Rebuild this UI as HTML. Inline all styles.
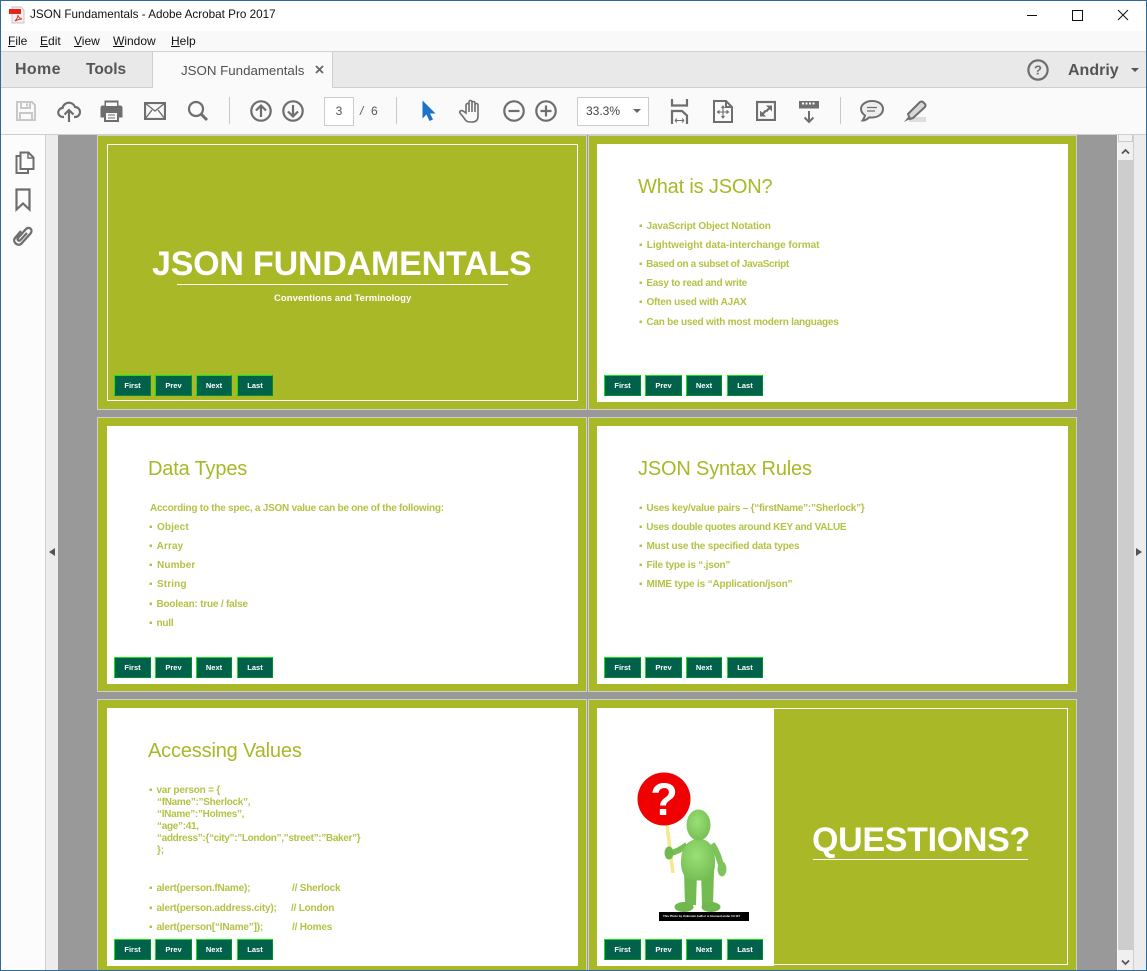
<!DOCTYPE html>
<html><head><meta charset="utf-8"><title>JSON Fundamentals</title>
<style>
html,body{margin:0;padding:0;background:#fff}
#w{position:relative;width:1147px;height:971px;overflow:hidden;background:#fff;font-family:"Liberation Sans",sans-serif}
#w div,#w svg{position:absolute}
.t{white-space:nowrap;line-height:1}
u{text-decoration:underline}
.m{font-size:12px;color:#111;top:35px}
.ic{fill:none;stroke:#6e6e6e;stroke-width:2.2}
.pg{background:#a8b827;box-shadow:0 0 0 1px #cfd0c8 inset}
.in{background:#fff;width:471px;height:258px}
.tt{font-size:20px;color:#a8b827;letter-spacing:-.17px;white-space:nowrap;line-height:1}
.b{font-size:10px;font-weight:bold;color:#a8b827;opacity:.86;white-space:nowrap;line-height:1;letter-spacing:-.2px;margin-top:1px}
.b i{font-style:normal;margin-right:1.5px}
.btn{background:#01614a;height:19px;border:1px solid;border-color:#15e515 #018c30 #018c30 #15e515;color:#fff;font-size:7.5px;font-weight:bold;text-align:center;line-height:19px;box-sizing:content-box}
</style></head><body><div id="w">

<div style="left:0;top:31px;width:1147px;height:20px;background:#f9f9f9"></div>
<div style="left:0;top:51px;width:1147px;height:1px;background:#d2d2d2"></div>
<div style="left:0;top:52px;width:1147px;height:35px;background:#e9e9e9"></div>
<div style="left:0;top:87px;width:1147px;height:1px;background:#cfcfcf"></div>
<div style="left:0;top:88px;width:1147px;height:46px;background:#fafafa"></div>
<div style="left:0;top:134px;width:1147px;height:1px;background:#cfcfcf"></div>

<svg style="left:8px;top:6px" width="18" height="18" viewBox="0 0 18 18"><path d="M4 1h9l3 3v13H4z" fill="#f2efef" stroke="#c9c5c5"/><rect x="1" y="3" width="12" height="5" fill="#e8231b"/><path d="M7 15c2-2 3-4 3-6 0 2 1 3 4 4-3 0-5 1-7 2z" fill="none" stroke="#d8342c"/></svg>
<div class="t" style="left:30px;top:9px;font-size:11.7px;color:#111">JSON Fundamentals - Adobe Acrobat Pro 2017</div>
<div style="left:1027px;top:15px;width:10px;height:1px;background:#111"></div>
<div style="left:1072px;top:10px;width:9px;height:9px;border:1px solid #111"></div>
<svg style="left:1117px;top:9px" width="12" height="12" viewBox="0 0 12 12"><path d="M1 1l10 10M11 1L1 11" stroke="#111" fill="none"/></svg>

<div class="t m" style="left:8px"><u>F</u>ile</div>
<div class="t m" style="left:40px"><u>E</u>dit</div>
<div class="t m" style="left:74px"><u>V</u>iew</div>
<div class="t m" style="left:113px"><u>W</u>indow</div>
<div class="t m" style="left:171px"><u>H</u>elp</div>

<div class="t" style="left:15px;top:62px;font-size:16px;letter-spacing:.35px;font-weight:bold;color:#555">Home</div>
<div class="t" style="left:86px;top:62px;font-size:15.5px;font-weight:bold;color:#555">Tools</div>
<div style="left:152px;top:52px;width:179px;height:36px;background:#fafafa;border-left:1px solid #cfcfcf;border-right:1px solid #cfcfcf"></div>
<div class="t" style="left:181px;top:64px;font-size:13.3px;color:#505050">JSON Fundamentals</div>
<svg style="left:315px;top:65px" width="9" height="9" viewBox="0 0 9 9"><path d="M1 1l7 7M8 1L1 8" stroke="#666" stroke-width="1.8"/></svg>
<svg style="left:1026px;top:58px" width="24" height="24" viewBox="0 0 24 24"><circle cx="12" cy="12" r="9.6" class="ic"/><text x="12" y="16.5" text-anchor="middle" font-size="13" font-weight="bold" fill="#6e6e6e" font-family="Liberation Sans">?</text></svg>
<div class="t" style="left:1068px;top:63px;font-size:16px;font-weight:bold;color:#555">Andriy</div>
<div style="left:1131px;top:68px;width:0;height:0;border:4px solid transparent;border-top:4px solid #555;border-bottom:0"></div>

<!-- toolbar icons -->
<svg style="left:15px;top:100px" width="22" height="22" viewBox="0 0 22 22"><path d="M2 2h15l3 3v15H2z M6 2v6h9V2 M12 3.5v3 M5 20v-7h12v7" fill="none" stroke="#c8c8c8" stroke-width="2"/></svg>
<svg style="left:57px;top:99px" width="24" height="24" viewBox="0 0 24 24"><path d="M7 18H6a4.5 4.5 0 0 1-.5-9A6.5 6.5 0 0 1 18 8a5 5 0 0 1 0 10h-1" class="ic"/><path d="M12 23V11M7.5 15.5L12 11l4.5 4.5" class="ic"/></svg>
<svg style="left:100px;top:100px" width="23" height="22" viewBox="0 0 23 22"><path d="M5 6V1h13v5M5 17H1V8q0-2 2-2h17q2 0 2 2v9h-4" fill="#6e6e6e" stroke="#6e6e6e"/><rect x="6" y="2.5" width="11" height="3.5" fill="#fafafa"/><rect x="5" y="12" width="13" height="9" fill="#fafafa" stroke="#6e6e6e" stroke-width="2"/><path d="M8 15h7M8 18h7" stroke="#6e6e6e"/></svg>
<svg style="left:144px;top:102px" width="22" height="18" viewBox="0 0 22 18"><rect x="1" y="1" width="20" height="16" class="ic"/><path d="M1 1l10 8 10-8M1 17l7-9M21 17l-7-9" fill="none" stroke="#6e6e6e" stroke-width="1.4"/></svg>
<svg style="left:187px;top:100px" width="22" height="22" viewBox="0 0 22 22"><circle cx="9" cy="9" r="7" class="ic"/><path d="M14 14l6 6" stroke="#6e6e6e" stroke-width="3"/></svg>
<div style="left:229px;top:97px;width:1px;height:27px;background:#c8c8c8"></div>
<svg style="left:250px;top:100px" width="22" height="22" viewBox="0 0 22 22"><circle cx="11" cy="11" r="9.7" class="ic"/><path d="M11 17V5.5M6 10.5l5-5 5 5" class="ic"/></svg>
<svg style="left:282px;top:100px" width="22" height="22" viewBox="0 0 22 22"><circle cx="11" cy="11" r="9.7" class="ic"/><path d="M11 5v11.5M6 11.5l5 5 5-5" class="ic"/></svg>
<div class="t" style="left:324px;top:97px;width:28px;height:27px;border:1px solid #ccc;background:#fff;font-size:12px;text-align:center;line-height:27px;color:#555">3</div>
<div class="t" style="left:360px;top:105px;font-size:12px;color:#555;font-style:italic">/</div>
<div class="t" style="left:371px;top:105px;font-size:12px;color:#556">6</div>
<div style="left:396px;top:97px;width:1px;height:27px;background:#c8c8c8"></div>

<svg style="left:421px;top:100px" width="16" height="22" viewBox="0 0 16 22"><path d="M1.5 0.5v18l4-4 3 6.500 3.500-1.500-3-6h5.500z" fill="#1a73c9"/></svg>
<svg style="left:459px;top:99px" width="24" height="25" viewBox="0 0 24 25"><path d="M7 14V6a1.4 1.4 0 0 1 3 0V3a1.4 1.4 0 0 1 3 0v1a1.4 1.4 0 0 1 3 0v2a1.4 1.4 0 0 1 3 0v11c0 4-2 6-6 6h-2c-3 0-4-1-6-4l-4-5c-1-2 1-3 3-2zM10 5v8M13 4v9M16 5v8" fill="none" stroke="#6e6e6e" stroke-width="1.6"/></svg>
<svg style="left:503px;top:100px" width="22" height="22" viewBox="0 0 22 22"><circle cx="11" cy="11" r="9.7" class="ic"/><path d="M5.5 11h11" class="ic"/></svg>
<svg style="left:535px;top:100px" width="22" height="22" viewBox="0 0 22 22"><circle cx="11" cy="11" r="9.7" class="ic"/><path d="M5.5 11h11M11 5.5v11" class="ic"/></svg>
<div style="left:577px;top:97px;width:70px;height:27px;border:1px solid #ccc;background:#fff"></div>
<div class="t" style="left:586px;top:105px;font-size:12px;color:#444">33.3%</div>
<div style="left:633px;top:109px;width:0;height:0;border:4px solid transparent;border-top:4px solid #666;border-bottom:0"></div>
<svg style="left:670px;top:99px" width="20" height="26" viewBox="0 0 20 26"><path d="M2 0v6.500h15V0M2 25V12h10l5 4.500V25" fill="none" stroke="#6e6e6e" stroke-width="2.200"/><path d="M5 21.500h9M5 21.500l2-2M5 21.500l2 2M14 21.500l-2-2M14 21.500l-2 2" stroke="#6e6e6e" fill="none"/></svg>
<svg style="left:713px;top:100px" width="20" height="23" viewBox="0 0 20 23"><path d="M1 1h12l6 6v15H1zM13 1v6h6" fill="none" stroke="#6e6e6e" stroke-width="2"/><path d="M10 6v12M4.500 12h11M8.500 8l1.500-2 1.500 2M8.500 16l1.500 2 1.500-2M6.500 10.500l-2 1.500 2 1.500M13.500 10.500l2 1.500-2 1.500" stroke="#6e6e6e" fill="none" stroke-width="1.1"/></svg>
<svg style="left:756px;top:100px" width="20" height="21" viewBox="0 0 20 21"><rect x="1" y="2" width="18" height="18" fill="none" stroke="#6e6e6e" stroke-width="2.200"/><path d="M10 5.500h6v6l-2.200-2.200-2.800 2.800-1.600-1.600 2.800-2.800zM10 16.500H4v-6l2.200 2.200 2.800-2.800 1.600 1.600-2.800 2.800z" fill="#6e6e6e"/></svg>
<svg style="left:798px;top:100px" width="22" height="24" viewBox="0 0 22 24"><rect x="1" y="1" width="20" height="7.500" fill="#6e6e6e"/><path d="M4 3.500h14" stroke="#fff" stroke-width="2" stroke-dasharray="2 1.500"/><path d="M11 11v11M6.500 17.500l4.500 4.500 4.500-4.500" stroke="#6e6e6e" stroke-width="2" fill="none"/></svg>
<div style="left:840px;top:97px;width:1px;height:27px;background:#c8c8c8"></div>
<svg style="left:860px;top:100px" width="24" height="23" viewBox="0 0 24 23"><path d="M12 1C6 1 1 4.500 1 9c0 3 2 5 4 6.500-.5 2-1.500 3.500-2.500 5 3 0 5-1.500 6.500-3H12c6 0 11-3.500 11-8.500S18 1 12 1z" fill="#eee" stroke="#6e6e6e" stroke-width="2"/><path d="M7 7.500h10M7 11h8" stroke="#6e6e6e" stroke-width="1.300"/></svg>
<svg style="left:903px;top:100px" width="24" height="23" viewBox="0 0 24 23"><rect x="6" y="17" width="17" height="5" fill="#dedede"/><path d="M1 22l4-5 2 2z" fill="#6e6e6e"/><path d="M5 14L17 2q2-1 3 0l2 2q1 1 0 3L10 18l-3 1z" fill="#d8d8d8" stroke="#6e6e6e" stroke-width="2"/></svg>

<!-- left side -->
<div style="left:1px;top:135px;width:44px;height:835px;background:#fcfcfc"></div>
<div style="left:45px;top:135px;width:1px;height:835px;background:#cfcfcf"></div>
<div style="left:46px;top:135px;width:12px;height:835px;background:#ececec"></div>
<svg style="left:15px;top:151px" width="20" height="23" viewBox="0 0 20 23"><path d="M5 5H1.500v17H13v-3" fill="none" stroke="#6e6e6e" stroke-width="2"/><path d="M5.500 1.500h8l5 5V18h-13z" fill="#fcfcfc" stroke="#6e6e6e" stroke-width="2"/><path d="M13 1v6h6" fill="none" stroke="#6e6e6e" stroke-width="1.500"/></svg>
<svg style="left:15px;top:188px" width="16" height="24" viewBox="0 0 16 24"><path d="M1.500 1.500h13v20L8 15.500 1.500 21.500z" fill="none" stroke="#6e6e6e" stroke-width="2.200"/></svg>
<svg style="left:12px;top:224px" width="23" height="23" viewBox="0 0 23 23"><path d="M9 7L3 14c-3 4 3 9 6.500 5.500l9-10c3-4-1.500-7.500-4.500-4.500L6 14c-1.500 2 1 3.500 2.500 2L15 9" fill="none" stroke="#6e6e6e" stroke-width="2.300"/></svg>
<div style="left:49px;top:548px;width:0;height:0;border:4px solid transparent;border-right:6px solid #555;border-left:0"></div>

<!-- gray canvas -->
<div style="left:58px;top:135px;width:1059px;height:835px;background:#999"></div>

<!-- pages -->
<div class="pg" style="left:97px;top:135px;width:490px;height:275px"></div>
<div class="pg" style="left:588px;top:135px;width:489px;height:275px"></div>
<div class="pg" style="left:97px;top:417px;width:490px;height:275px"></div>
<div class="pg" style="left:588px;top:417px;width:489px;height:275px"></div>
<div class="pg" style="left:97px;top:699px;width:490px;height:272px"></div>
<div class="pg" style="left:588px;top:699px;width:489px;height:272px"></div>

<!-- slide 1 -->
<div style="left:107px;top:144px;width:469px;height:255px;border:1px solid #fff"></div>
<div class="t" style="left:152px;top:247px;font-size:34px;color:#fff;font-weight:bold;letter-spacing:-.2px">JSON FUNDAMENTALS</div>
<div style="left:177px;top:284px;width:331px;height:1px;background:#fff"></div>
<div class="t" style="left:274px;top:294px;font-size:9.500px;font-weight:bold;color:#fff;letter-spacing:.05px">Conventions and Terminology</div>

<!-- slide 2 -->
<div class="in" style="left:597px;top:144px"></div>
<div class="tt" style="left:638px;top:177px">What is JSON?</div>
<div class="b" style="left:639px;top:221px;letter-spacing:-.14px"><i>▪</i> JavaScript Object Notation</div>
<div class="b" style="left:639px;top:240px;letter-spacing:-.02px"><i>▪</i> Lightweight data-interchange format</div>
<div class="b" style="left:639px;top:259px;letter-spacing:-.36px"><i>▪</i> Based on a subset of JavaScript</div>
<div class="b" style="left:639px;top:278px;letter-spacing:-.25px"><i>▪</i> Easy to read and write</div>
<div class="b" style="left:639px;top:297px"><i>▪</i> Often used with AJAX</div>
<div class="b" style="left:639px;top:317px;letter-spacing:-.22px"><i>▪</i> Can be used with most modern languages</div>

<!-- slide 3 -->
<div class="in" style="left:107px;top:426px"></div>
<div class="tt" style="left:148px;top:459px">Data Types</div>
<div class="b" style="left:150px;top:503px;letter-spacing:-.245px">According to the spec, a JSON value can be one of the following:</div>
<div class="b" style="left:149px;top:522px;letter-spacing:.1px"><i>▪</i> Object</div>
<div class="b" style="left:149px;top:541px;letter-spacing:.1px"><i>▪</i> Array</div>
<div class="b" style="left:149px;top:560px;letter-spacing:.1px"><i>▪</i> Number</div>
<div class="b" style="left:149px;top:579px;letter-spacing:.1px"><i>▪</i> String</div>
<div class="b" style="left:149px;top:599px"><i>▪</i> Boolean: true / false</div>
<div class="b" style="left:149px;top:618px"><i>▪</i> null</div>

<!-- slide 4 -->
<div class="in" style="left:597px;top:426px"></div>
<div class="tt" style="left:638px;top:459px">JSON Syntax Rules</div>
<div class="b" style="left:639px;top:503px;letter-spacing:-.23px"><i>▪</i> Uses key/value pairs – {“firstName”:”Sherlock”}</div>
<div class="b" style="left:639px;top:522px;letter-spacing:-.29px"><i>▪</i> Uses double quotes around KEY and VALUE</div>
<div class="b" style="left:639px;top:541px"><i>▪</i> Must use the specified data types</div>
<div class="b" style="left:639px;top:560px;letter-spacing:-.2px"><i>▪</i> File type is “.json”</div>
<div class="b" style="left:639px;top:579px;letter-spacing:-.17px"><i>▪</i> MIME type is “Application/json”</div>

<!-- slide 5 -->
<div class="in" style="left:107px;top:708px"></div>
<div class="tt" style="left:148px;top:741px">Accessing Values</div>
<div class="b" style="left:149px;top:785px"><i>▪</i> var person = {</div>
<div class="b" style="left:157px;top:797px;letter-spacing:-.3px">“fName”:”Sherlock”,</div>
<div class="b" style="left:157px;top:809px;letter-spacing:-.3px">“lName”:”Holmes”,</div>
<div class="b" style="left:157px;top:821px;letter-spacing:-.3px">“age”:41,</div>
<div class="b" style="left:157px;top:833px;letter-spacing:-.33px">“address”:{“city”:”London”,”street”:”Baker”}</div>
<div class="b" style="left:157px;top:845px">};</div>
<div class="b" style="left:149px;top:883px"><i>▪</i> alert(person.fName);</div>
<div class="b" style="left:292px;top:883px">// Sherlock</div>
<div class="b" style="left:149px;top:903px"><i>▪</i> alert(person.address.city);</div>
<div class="b" style="left:291px;top:903px">// London</div>
<div class="b" style="left:149px;top:922px"><i>▪</i> alert(person[“lName”]);</div>
<div class="b" style="left:292px;top:922px">// Homes</div>

<!-- slide 6 -->
<div class="in" style="left:597px;top:708px;width:177px"></div>
<div style="left:774px;top:708px;width:293px;height:255px;border:1px solid #fff;border-left:0"></div>
<div class="t" style="left:812px;top:823px;font-size:34px;font-weight:bold;color:#fff;letter-spacing:-.3px">QUESTIONS?</div>
<div style="left:813px;top:859px;width:215px;height:1px;background:#fff"></div>
<svg style="left:630px;top:765px" width="110" height="150" viewBox="0 0 110 150">
<defs><radialGradient id="g" cx=".45" cy=".4" r=".75"><stop offset="0" stop-color="#9ae076"/><stop offset="1" stop-color="#6fb84e"/></radialGradient></defs>
<path d="M37 60l6 48" stroke="#f7e98a" stroke-width="3.500"/>
<path d="M40 88C47 87 51 84 57 80" stroke="#79bd55" stroke-width="6" fill="none"/>
<ellipse cx="39" cy="88" rx="4.500" ry="6.500" fill="#6fb74f"/>
<path d="M82 79c5 7 7 14 9 21" stroke="#7fc25a" stroke-width="6" fill="none"/>
<ellipse cx="92" cy="104" rx="4.500" ry="7.500" fill="#81c45c"/>
<path d="M54 106h13l-1 34H55zM71 106h13l-1 34H72z" fill="#74bb52"/>
<ellipse cx="54" cy="142" rx="9.500" ry="5" fill="#6fb84e"/>
<ellipse cx="81" cy="142" rx="9.500" ry="5" fill="#6fb84e"/>
<path d="M51 97c0-15 7-23 18-23s16 9 16 23c0 9-2 14-5 17-7 2-16 2-23 0-4-4-6-9-6-17z" fill="url(#g)"/>
<ellipse cx="68.500" cy="60" rx="12" ry="15.500" fill="url(#g)"/>
<circle cx="34" cy="34" r="26.500" fill="#f00000"/>
<text x="34" y="50" text-anchor="middle" font-size="45" font-weight="bold" fill="#fff" font-family="Liberation Sans">?</text>
</svg>
<div style="left:659px;top:912px;width:90px;height:9px;background:#000"></div>
<div class="t" style="left:663px;top:915px;font-size:2.900px;font-weight:bold;color:#fff;white-space:nowrap">This Photo by Unknown Author is licensed under CC BY</div>

<!-- nav buttons -->
<div class="btn" style="left:114px;top:375px;width:35px">First</div><div class="btn" style="left:155px;top:375px;width:35px">Prev</div><div class="btn" style="left:196px;top:375px;width:34px">Next</div><div class="btn" style="left:237px;top:375px;width:34px">Last</div>
<div class="btn" style="left:604px;top:375px;width:35px">First</div><div class="btn" style="left:645px;top:375px;width:35px">Prev</div><div class="btn" style="left:686px;top:375px;width:34px">Next</div><div class="btn" style="left:727px;top:375px;width:34px">Last</div>
<div class="btn" style="left:114px;top:657px;width:35px">First</div><div class="btn" style="left:155px;top:657px;width:35px">Prev</div><div class="btn" style="left:196px;top:657px;width:34px">Next</div><div class="btn" style="left:237px;top:657px;width:34px">Last</div>
<div class="btn" style="left:604px;top:657px;width:35px">First</div><div class="btn" style="left:645px;top:657px;width:35px">Prev</div><div class="btn" style="left:686px;top:657px;width:34px">Next</div><div class="btn" style="left:727px;top:657px;width:34px">Last</div>
<div class="btn" style="left:114px;top:939px;width:35px">First</div><div class="btn" style="left:155px;top:939px;width:35px">Prev</div><div class="btn" style="left:196px;top:939px;width:34px">Next</div><div class="btn" style="left:237px;top:939px;width:34px">Last</div>
<div class="btn" style="left:604px;top:939px;width:35px">First</div><div class="btn" style="left:645px;top:939px;width:35px">Prev</div><div class="btn" style="left:686px;top:939px;width:34px">Next</div><div class="btn" style="left:727px;top:939px;width:34px">Last</div>

<!-- right scrollbar -->
<div style="left:1117px;top:135px;width:16px;height:835px;background:#f0f0f0;border-left:1px solid #f8f8f8;box-sizing:border-box"></div>
<div style="left:1118px;top:135px;width:15px;height:7px;background:#f2f2f2;border:1px solid #c8c8c8;border-top:0;box-sizing:border-box"></div>
<svg style="left:1121px;top:148px" width="9" height="7" viewBox="0 0 9 7"><path d="M1 5.500l3.500-3.500L8 5.500" fill="none" stroke="#555" stroke-width="1.800"/></svg>
<div style="left:1118px;top:160px;width:15px;height:790px;background:#cdcdcd"></div>
<svg style="left:1121px;top:959px" width="9" height="7" viewBox="0 0 9 7"><path d="M1 1.500L4.500 5 8 1.500" fill="none" stroke="#555" stroke-width="1.800"/></svg>
<div style="left:1133px;top:135px;width:1px;height:835px;background:#cfcfcf"></div>
<div style="left:1134px;top:135px;width:12px;height:835px;background:#ececec"></div>
<div style="left:1136px;top:548px;width:0;height:0;border:4px solid transparent;border-left:6px solid #555;border-right:0"></div>

<!-- window border -->
<div style="left:0;top:0;width:1147px;height:1px;background:#2e6a94"></div>
<div style="left:0;top:0;width:1px;height:971px;background:#2e6a94"></div>
<div style="left:1146px;top:0;width:1px;height:971px;background:#2e6a94"></div>
<div style="left:0;top:970px;width:1147px;height:1px;background:#2e6a94"></div>
</div></body></html>
